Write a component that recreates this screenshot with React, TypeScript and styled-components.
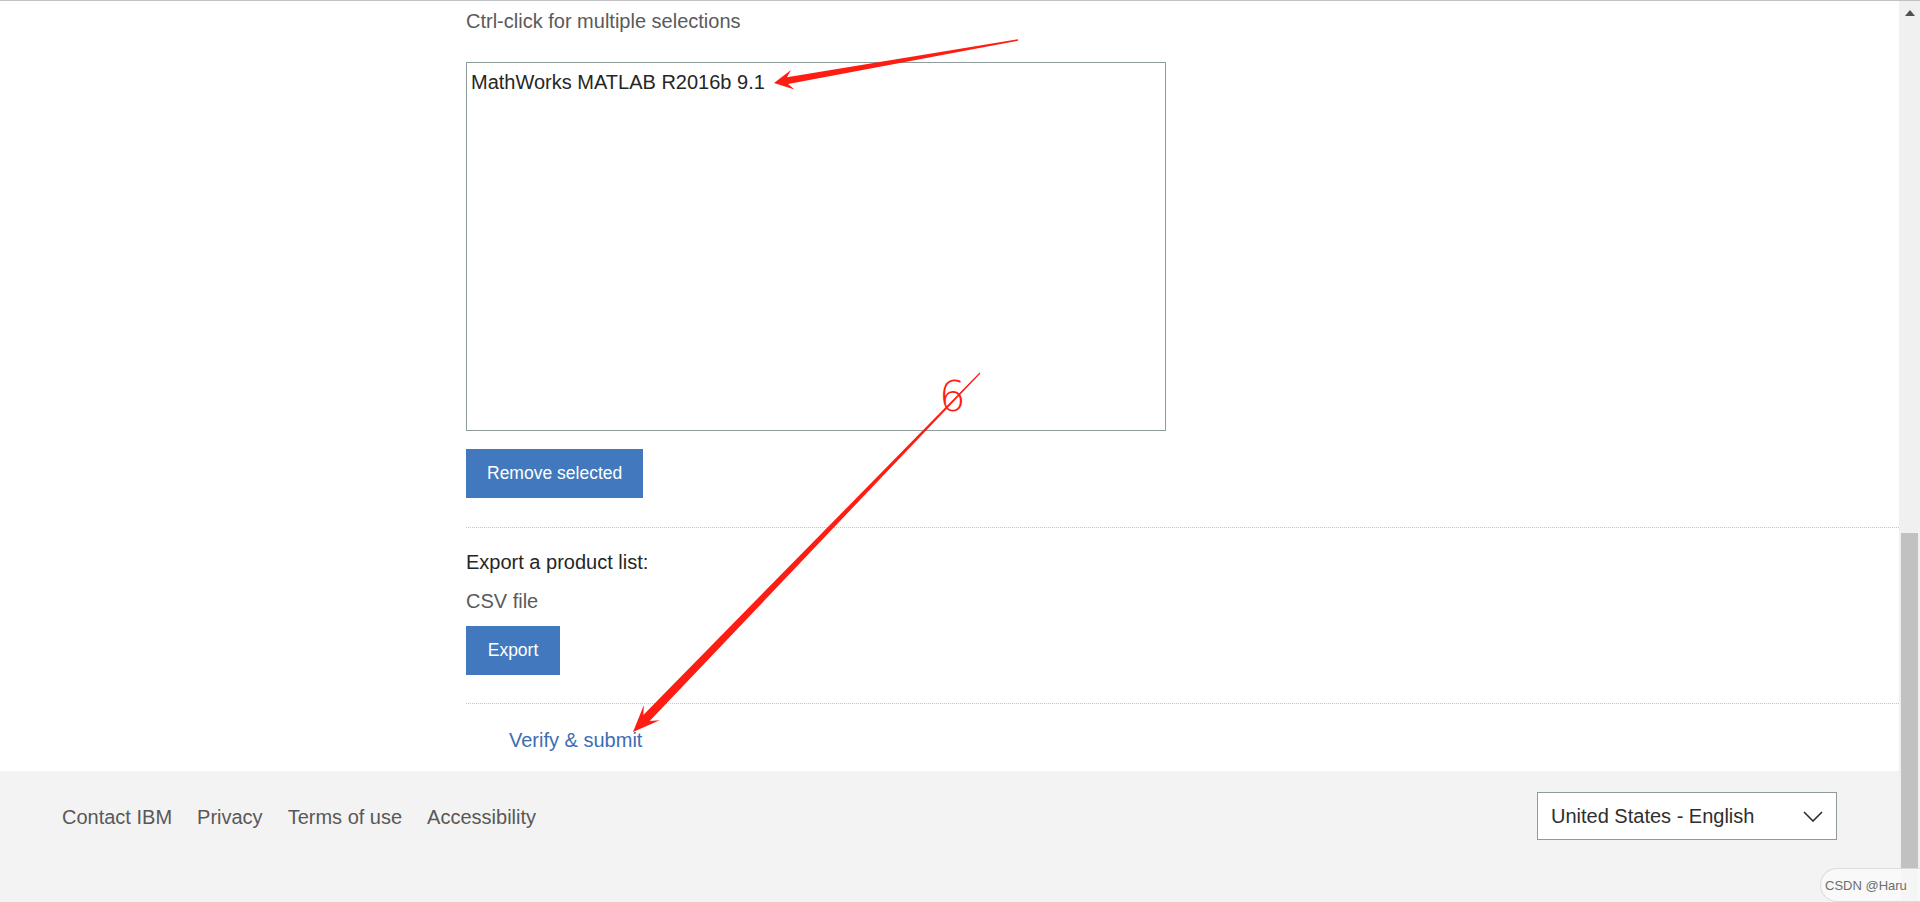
import { FC } from "react";
import styled, { createGlobalStyle } from "styled-components";

const GlobalStyle = createGlobalStyle`
  html, body {
    margin: 0;
    padding: 0;
    height: 902px;
    overflow: hidden;
    background: #fff;
  }
  body {
    font-family: "Liberation Sans", Arial, sans-serif;
  }
`;

const Viewport = styled.div`
  position: relative;
  width: 1920px;
  height: 902px;
  box-sizing: border-box;
  border-top: 1px solid #c2c2c2;
  display: flex;
  overflow: hidden;
`;

const Page = styled.div`
  flex: 1;
  min-width: 0;
  display: flex;
  flex-direction: column;
`;

const Content = styled.main`
  flex: 1;
  display: flex;
  flex-direction: column;
  align-items: flex-start;
  padding: 8px 0 0 466px;
`;

interface ITextStyles {
  tone?: "muted" | "dark";
  gap?: number;
}

const Text = styled.p<ITextStyles>`
  margin: ${({ gap }) => gap ?? 0}px 0 0;
  font-size: 20px;
  line-height: 24px;
  color: ${({ tone }) => (tone === "dark" ? "#262626" : "#5a5a5a")};
`;

const ListBox = styled.div`
  margin-top: 29px;
  width: 700px;
  height: 369px;
  box-sizing: border-box;
  border: 1px solid #8f9a9a;
  padding: 7px 4px 0;
  background: #fff;
`;

const Option = styled.div`
  font-size: 20px;
  line-height: 24px;
  color: #262626;
`;

const Button = styled.button<{ gap: number }>`
  margin-top: ${({ gap }) => gap}px;
  height: 49px;
  min-width: 94px;
  padding: 0 21px;
  border: none;
  background: #4178be;
  color: #fff;
  font-family: "Liberation Sans", Arial, sans-serif;
  font-size: 17.5px;
  cursor: pointer;
`;

const Divider = styled.hr<{ gap: number }>`
  align-self: stretch;
  margin: ${({ gap }) => gap}px 0 0;
  border: none;
  border-top: 1px dotted #c4c4c4;
  height: 0;
`;

const SubmitLink = styled.a`
  margin-top: 24px;
  padding-left: 43px;
  font-size: 20px;
  line-height: 24px;
  color: #3d6db2;
  text-decoration: none;
`;

const Footer = styled.footer`
  height: 131px;
  box-sizing: border-box;
  padding: 21px 62px 0;
  background: #f3f3f3;
  display: flex;
  justify-content: space-between;
  align-items: flex-start;
`;

const LinkRow = styled.nav`
  height: 48px;
  display: flex;
  align-items: center;
  gap: 25px;
  padding-top: 2px;
  box-sizing: border-box;
`;

const FooterLink = styled.a`
  font-size: 20px;
  line-height: 24px;
  color: #585858;
  text-decoration: none;
`;

const LocaleSelect = styled.div`
  width: 300px;
  height: 48px;
  box-sizing: border-box;
  border: 1px solid #8f9a9a;
  background: #fff;
  padding: 0 13px;
  display: flex;
  align-items: center;
  justify-content: space-between;
  font-size: 20px;
  line-height: 24px;
  color: #2e2e2e;
`;

const Scrollbar = styled.div`
  width: 21px;
  background: #f0f0f0;
  display: flex;
  flex-direction: column;
  align-items: center;
`;

const ScrollArrow = styled.svg`
  margin-top: 9px;
`;

const ScrollThumb = styled.div`
  margin-top: auto;
  align-self: stretch;
  margin-left: 2px;
  margin-right: 2px;
  height: 369px;
  background: #c1c1c1;
`;

const Watermark = styled.div`
  position: absolute;
  right: 0;
  bottom: 0;
  width: 100px;
  height: 34px;
  box-sizing: border-box;
  padding-left: 4px;
  border: 1px solid #dcdcdc;
  border-right: none;
  border-radius: 17px 0 0 17px;
  background: rgba(250, 250, 250, 0.92);
  display: flex;
  align-items: center;
  font-size: 13px;
  color: #6d6d6d;
  white-space: nowrap;
`;

const Annotations = styled.svg`
  position: absolute;
  left: 0;
  top: 0;
  pointer-events: none;
`;

const RED = "#fe1d12";

// tapered arrow with a notched head, from tail (x1,y1) to tip (x2,y2)
const arrowPoints = (
  x1: number, y1: number, x2: number, y2: number,
  tailW: number, neckW: number, headLen: number, headHalf: number
) => {
  const len = Math.hypot(x2 - x1, y2 - y1);
  const ux = (x2 - x1) / len, uy = (y2 - y1) / len;
  const px = -uy, py = ux;
  const nx = x2 - ux * headLen * 0.72, ny = y2 - uy * headLen * 0.72;
  const bx = x2 - ux * headLen, by = y2 - uy * headLen;
  const pts = [
    [x1 + px * tailW / 2, y1 + py * tailW / 2],
    [nx + px * neckW / 2, ny + py * neckW / 2],
    [bx + px * headHalf, by + py * headHalf],
    [x2, y2],
    [bx - px * headHalf, by - py * headHalf],
    [nx - px * neckW / 2, ny - py * neckW / 2],
    [x1 - px * tailW / 2, y1 - py * tailW / 2],
  ];
  return pts.map(p => p.map(v => v.toFixed(1)).join(",")).join(" ");
};

const footerLinks = ["Contact IBM", "Privacy", "Terms of use", "Accessibility"];

const App: FC = () => {
  return (
    <>
      <GlobalStyle />
      <Viewport>
        <Page>
          <Content>
            <Text>Ctrl-click for multiple selections</Text>
            <ListBox>
              <Option>MathWorks MATLAB R2016b 9.1</Option>
            </ListBox>
            <Button gap={18}>Remove selected</Button>
            <Divider gap={29} />
            <Text tone="dark" gap={22}>Export a product list:</Text>
            <Text gap={15}>CSV file</Text>
            <Button gap={13}>Export</Button>
            <Divider gap={28} />
            <SubmitLink href="#">Verify &amp; submit</SubmitLink>
          </Content>
          <Footer>
            <LinkRow>
              {footerLinks.map(l => (
                <FooterLink key={l} href="#">{l}</FooterLink>
              ))}
            </LinkRow>
            <LocaleSelect>
              <span>United States - English</span>
              <svg width="20" height="11" viewBox="0 0 20 11">
                <path d="M1 1 L10 10 L19 1" fill="none" stroke="#2e2e2e" strokeWidth="1.6" />
              </svg>
            </LocaleSelect>
          </Footer>
        </Page>
        <Scrollbar>
          <ScrollArrow width="10" height="6" viewBox="0 0 10 6">
            <path d="M0 6 L5 0 L10 6 Z" fill="#505050" />
          </ScrollArrow>
          <ScrollThumb />
        </Scrollbar>

        <Annotations width="1920" height="902" viewBox="0 0 1920 902">
          <polygon points={arrowPoints(1018, 39, 774, 82, 1.5, 7, 19, 10)} fill={RED} />
          <polygon points={arrowPoints(980, 372, 633, 731, 1.2, 9, 27, 11)} fill={RED} />
          <text x="939" y="410" fontSize="42" fill={RED}
                fontFamily="'DejaVu Sans', sans-serif" fontWeight="200">6</text>
        </Annotations>

        <Watermark>CSDN @Haru</Watermark>
      </Viewport>
    </>
  );
};

export default App;
